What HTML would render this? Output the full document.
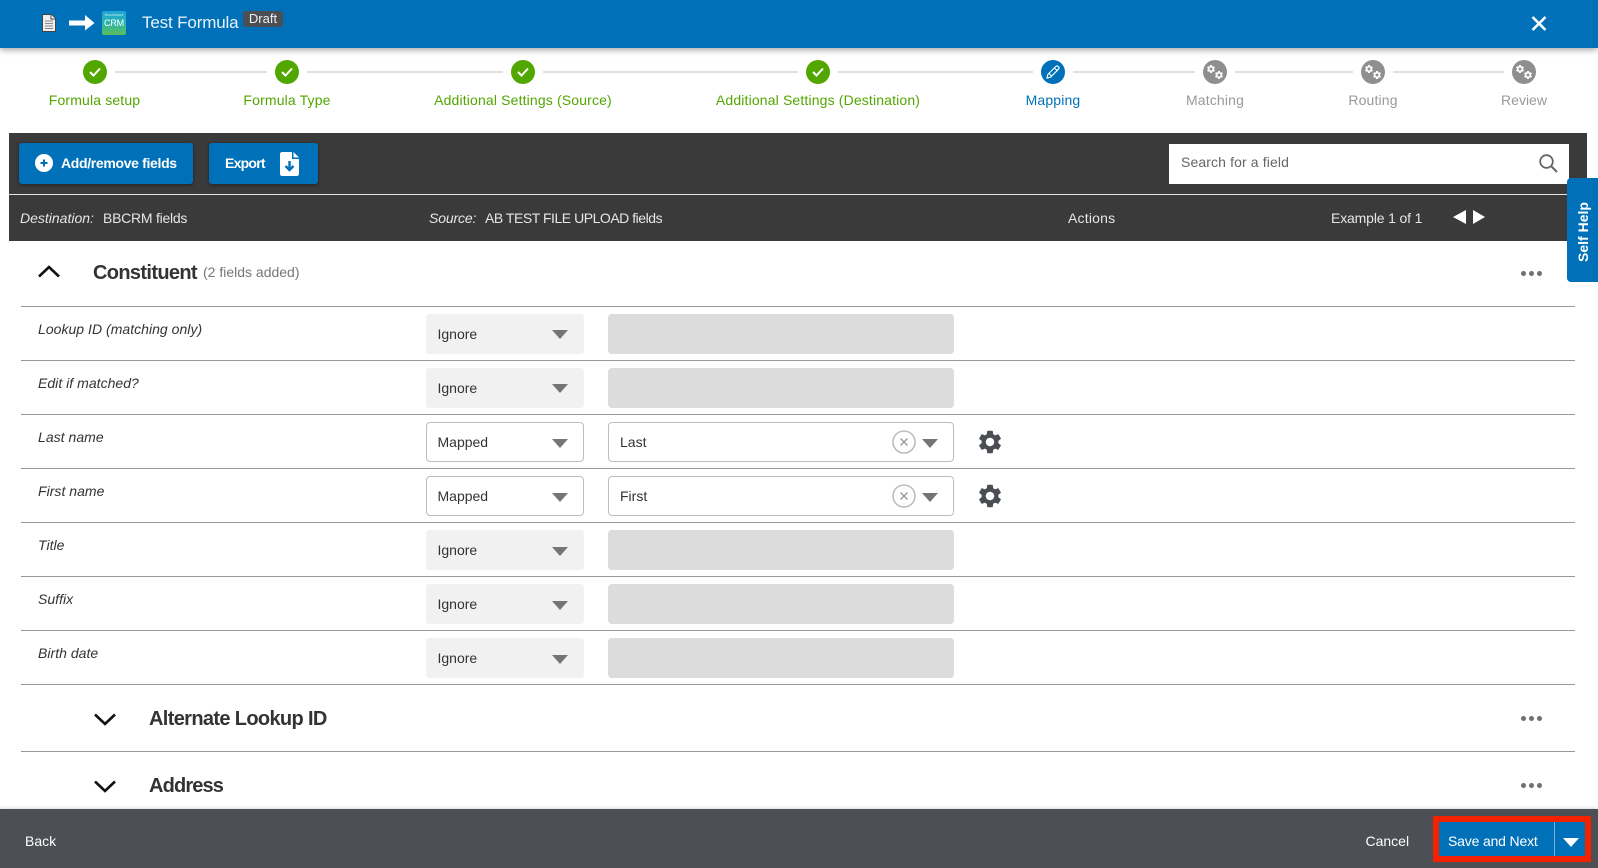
<!DOCTYPE html>
<html lang="en">
<head>
<meta charset="utf-8">
<title>Test Formula</title>
<style>
html,body{margin:0;padding:0;background:#fff;}
body{width:1598px;height:868px;position:relative;overflow:hidden;font-family:"Liberation Sans",Arial,sans-serif;font-size:14px;color:#333;}
.a{position:absolute;}
.t{position:absolute;white-space:nowrap;line-height:20px;height:20px;}
.circle{position:absolute;width:24px;height:24px;border-radius:50%;top:60px;}
.line{position:absolute;top:71px;height:2px;background:#e0e0e0;}
.lbl{position:absolute;top:90px;line-height:20px;white-space:nowrap;text-align:center;transform:translateX(-50%);letter-spacing:.15px;}
.g{color:#52a600;}
.hr{position:absolute;left:21px;width:1554px;height:1px;background:#999;}
.sel{position:absolute;left:426px;width:158px;height:40px;box-sizing:border-box;border-radius:3px;}
.sel.ig{background:#f1f1f1;}
.sel.mp{background:#fff;border:1px solid #bdbdbd;border-radius:4px;}
.inp{position:absolute;left:608px;width:346px;height:40px;box-sizing:border-box;border-radius:4px;}
.inp.dis{background:#dcdcdc;}
.inp.mp{background:#fff;border:1px solid #bdbdbd;}
.arr{position:absolute;width:0;height:0;border-left:8px solid transparent;border-right:8px solid transparent;border-top:9px solid #757575;}
.rowl{position:absolute;left:38px;font-style:italic;color:#333;line-height:20px;white-space:nowrap;letter-spacing:.03px;}
.val{position:absolute;left:437.500px;line-height:20px;color:#333;white-space:nowrap;}
.dot{position:absolute;width:5px;height:5px;border-radius:50%;background:#6f6f6f;}
.h2{position:absolute;font-weight:bold;font-size:20px;line-height:24px;color:#333;white-space:nowrap;letter-spacing:-.65px;}
svg{position:absolute;display:block;overflow:visible;}
</style>
</head>
<body>
<svg width="0" height="0" style="position:absolute"><defs>
<symbol id="gear" viewBox="0 0 24 24"><path fill-rule="evenodd" d="M19.14 12.94c.04-.3.06-.61.06-.94 0-.32-.02-.64-.07-.94l2.03-1.58c.18-.14.23-.41.12-.61l-1.92-3.32c-.12-.22-.37-.29-.59-.22l-2.39.96c-.5-.38-1.03-.7-1.62-.94l-.36-2.54c-.04-.24-.24-.41-.48-.41h-3.84c-.24 0-.43.17-.47.41l-.36 2.54c-.59.24-1.13.57-1.62.94l-2.39-.96c-.22-.08-.47 0-.59.22L2.74 8.87c-.12.21-.08.47.12.61l2.03 1.58c-.05.3-.09.63-.09.94s.02.64.07.94l-2.03 1.58c-.18.14-.23.41-.12.61l1.92 3.32c.12.22.37.29.59.22l2.39-.96c.5.38 1.03.7 1.62.94l.36 2.54c.05.24.24.41.48.41h3.84c.24 0 .44-.17.47-.41l.36-2.54c.59-.24 1.13-.56 1.62-.94l2.39.96c.22.08.47 0 .59-.22l1.92-3.32c.12-.22.07-.47-.12-.61l-2.01-1.58zM12 15.6c-1.98 0-3.6-1.62-3.6-3.6s1.62-3.6 3.6-3.6 3.6 1.62 3.6 3.6-1.62 3.6-3.6 3.6z"/></symbol>
</defs></svg>

<!-- header -->
<div class="a" style="left:0;top:0;width:1598px;height:48px;background:#0071b9;box-shadow:0 2px 6px rgba(0,0,0,.35);z-index:2;"></div>
<div class="a" style="left:0;top:0;width:1598px;height:48px;z-index:3;">
  <svg style="left:42px;top:14px" width="14" height="18" viewBox="0 0 14 18">
    <path d="M.5.5H9L13.5 5V17.5H.5Z" fill="#eee" stroke="#444" stroke-width="1"/>
    <path d="M9 .5V5h4.5" fill="#fff" stroke="#444" stroke-width="1"/>
    <path d="M3 7h8M3 9.500h8M3 12h8M3 14.500h8" stroke="#8a8a8a" stroke-width="1"/>
  </svg>
  <svg style="left:69px;top:15px" width="26" height="16" viewBox="0 0 26 16"><path d="M0 5.500H16V0L25.500 8 16 15.500V10.500H0Z" fill="#fff"/></svg>
  <div class="a" style="left:102px;top:11px;width:24px;height:24px;border-radius:2px;background:linear-gradient(#1ba4d8 0%,#2eb6a5 55%,#5cbd58 100%);"></div>
  <div class="t" style="left:102px;top:12px;width:24px;text-align:center;font-size:4px;line-height:6px;height:6px;color:#bfe9e4;">Blackbaud</div>
  <div class="t" style="left:102px;top:18px;width:24px;text-align:center;font-size:9px;line-height:10px;height:10px;color:#fff;letter-spacing:-.2px;">CRM</div>
  <div class="t" style="left:142px;top:12px;font-size:17px;line-height:22px;height:22px;color:#e9f3fa;letter-spacing:-.15px;">Test Formula</div>
  <div class="a" style="left:243px;top:11px;width:40px;height:16px;background:#4b4e53;border-radius:3px;"></div>
  <div class="t" style="left:243px;top:9px;width:40px;text-align:center;font-size:13px;color:#eee;">Draft</div>
  <svg style="left:1531px;top:16px" width="16" height="15" viewBox="0 0 16 15"><path d="M1.500 1 14.500 14M14.500 1 1.500 14" stroke="#fff" stroke-width="2.600" fill="none"/></svg>
</div>

<!-- stepper -->
<div class="line" style="left:115px;width:152px;"></div>
<div class="line" style="left:307px;width:196px;"></div>
<div class="line" style="left:543px;width:255px;"></div>
<div class="line" style="left:838px;width:195px;"></div>
<div class="line" style="left:1073px;width:122px;"></div>
<div class="line" style="left:1235px;width:118px;"></div>
<div class="line" style="left:1393px;width:111px;"></div>

<div class="circle" style="left:83px;background:#52a600;"><svg style="left:6px;top:7px" width="12" height="10" viewBox="0 0 12 10"><path d="M1 5 4.500 8.500 11 1.500" stroke="#fff" stroke-width="2" fill="none"/></svg></div>
<div class="circle" style="left:275px;background:#52a600;"><svg style="left:6px;top:7px" width="12" height="10" viewBox="0 0 12 10"><path d="M1 5 4.500 8.500 11 1.500" stroke="#fff" stroke-width="2" fill="none"/></svg></div>
<div class="circle" style="left:511px;background:#52a600;"><svg style="left:6px;top:7px" width="12" height="10" viewBox="0 0 12 10"><path d="M1 5 4.500 8.500 11 1.500" stroke="#fff" stroke-width="2" fill="none"/></svg></div>
<div class="circle" style="left:806px;background:#52a600;"><svg style="left:6px;top:7px" width="12" height="10" viewBox="0 0 12 10"><path d="M1 5 4.500 8.500 11 1.500" stroke="#fff" stroke-width="2" fill="none"/></svg></div>
<div class="circle" style="left:1041px;background:#0071b9;"><svg style="left:5px;top:5px" width="14" height="14" viewBox="0 0 14 14"><path d="M1 13 1.800 9.500 9.800 1.500C10.500.8 11.500.8 12.200 1.500L12.500 1.800C13.200 2.500 13.200 3.500 12.500 4.200L4.500 12.200ZM3 8.500 5.500 11M8.500 3 11 5.500" stroke="#fff" stroke-width="1.100" fill="none"/></svg></div>
<div class="circle" style="left:1203px;background:#8f8f8f;"><svg style="left:3px;top:4px;fill:#fff" width="10" height="10"><use href="#gear"/></svg><svg style="left:11px;top:10px;fill:#fff" width="10" height="10"><use href="#gear"/></svg></div>
<div class="circle" style="left:1361px;background:#8f8f8f;"><svg style="left:3px;top:4px;fill:#fff" width="10" height="10"><use href="#gear"/></svg><svg style="left:11px;top:10px;fill:#fff" width="10" height="10"><use href="#gear"/></svg></div>
<div class="circle" style="left:1512px;background:#8f8f8f;"><svg style="left:3px;top:4px;fill:#fff" width="10" height="10"><use href="#gear"/></svg><svg style="left:11px;top:10px;fill:#fff" width="10" height="10"><use href="#gear"/></svg></div>

<div class="lbl g" style="left:94.500px;">Formula setup</div>
<div class="lbl g" style="left:287px;">Formula Type</div>
<div class="lbl g" style="left:523px;">Additional Settings (Source)</div>
<div class="lbl g" style="left:818px;">Additional Settings (Destination)</div>
<div class="lbl" style="left:1053px;color:#0071b9;">Mapping</div>
<div class="lbl" style="left:1215px;color:#999;">Matching</div>
<div class="lbl" style="left:1373px;color:#999;">Routing</div>
<div class="lbl" style="left:1524px;color:#999;letter-spacing:0;">Review</div>

<!-- toolbar -->
<div class="a" style="left:9px;top:133px;width:1578px;height:108px;background:#3a3a3a;"></div>
<div class="a" style="left:9px;top:194px;width:1578px;height:1px;background:#e4e4e4;"></div>
<div class="a" style="left:19px;top:143px;width:174px;height:41px;background:#0071b9;border-radius:3px;box-shadow:0 1px 3px rgba(0,0,0,.4);"></div>
<svg style="left:35px;top:154px" width="18" height="18" viewBox="0 0 18 18"><circle cx="9" cy="9" r="9" fill="#fff"/><path d="M9 5.500V12.500M5.500 9H12.500" stroke="#0071b9" stroke-width="2"/></svg>
<div class="t" style="left:61px;top:153px;color:#fff;font-weight:bold;letter-spacing:-.33px;">Add/remove fields</div>
<div class="a" style="left:209px;top:143px;width:109px;height:41px;background:#0071b9;border-radius:3px;box-shadow:0 1px 3px rgba(0,0,0,.4);"></div>
<div class="t" style="left:225px;top:153px;color:#fff;font-weight:bold;letter-spacing:-.75px;">Export</div>
<svg style="left:280px;top:152px" width="19" height="24" viewBox="0 0 19 24"><path d="M2 0H12V7H19V22C19 23 18 24 17 24H2C1 24 0 23 0 22V2C0 1 1 0 2 0Z" fill="#fff"/><path d="M13.500 0 19 5.500H13.500Z" fill="#fff"/><path d="M9.500 9V17M5.500 14 9.500 18 13.500 14" stroke="#0071b9" stroke-width="2.400" fill="none"/></svg>

<div class="a" style="left:1169px;top:144px;width:400px;height:40px;background:#fff;"></div>
<div class="t" style="left:1181px;top:152px;color:#666;letter-spacing:.12px;">Search for a field</div>
<svg style="left:1539px;top:154px" width="19" height="19" viewBox="0 0 19 19"><circle cx="7.500" cy="7.500" r="6.300" stroke="#666" stroke-width="1.800" fill="none"/><path d="M12 12 18 18" stroke="#666" stroke-width="2"/></svg>

<div class="t" style="left:20px;top:208px;color:#e6e6e6;font-style:italic;">Destination:</div>
<div class="t" style="left:103px;top:208px;color:#e6e6e6;letter-spacing:-.25px;">BBCRM fields</div>
<div class="t" style="left:429px;top:208px;color:#e6e6e6;font-style:italic;letter-spacing:-.15px;">Source:</div>
<div class="t" style="left:485px;top:208px;color:#e6e6e6;letter-spacing:-.47px;">AB TEST FILE UPLOAD fields</div>
<div class="t" style="left:1068px;top:208px;color:#e6e6e6;letter-spacing:.2px;">Actions</div>
<div class="t" style="left:1331px;top:208px;color:#e6e6e6;letter-spacing:-.15px;">Example 1 of 1</div>
<svg style="left:1453px;top:210px" width="33" height="14" viewBox="0 0 33 14"><path d="M13 0V14L0 7Z" fill="#fff"/><path d="M20 0V14L32 7Z" fill="#fff"/></svg>

<!-- self help -->
<div class="a" style="left:1567px;top:178px;width:31px;height:104px;background:#0071b9;border-radius:4px 0 0 4px;z-index:5;"></div>
<div class="a" style="left:1540px;top:222px;width:86px;height:20px;line-height:20px;text-align:center;font-weight:bold;font-size:14px;color:#fff;transform:rotate(-90deg);z-index:6;white-space:nowrap;">Self Help</div>

<!-- Constituent -->
<svg style="left:38px;top:265px" width="22" height="13" viewBox="0 0 22 13"><path d="M1 11.500 11 2 21 11.500" stroke="#111" stroke-width="2.600" fill="none"/></svg>
<div class="h2" style="left:93px;top:261px;">Constituent</div>
<div class="t" style="left:203px;top:262px;color:#777;">(2 fields added)</div>
<div class="dot" style="left:1521px;top:271px;"></div><div class="dot" style="left:1529px;top:271px;"></div><div class="dot" style="left:1537px;top:271px;"></div>

<div class="hr" style="top:306px;"></div>
<div class="hr" style="top:360px;"></div>
<div class="hr" style="top:414px;"></div>
<div class="hr" style="top:468px;"></div>
<div class="hr" style="top:522px;"></div>
<div class="hr" style="top:576px;"></div>
<div class="hr" style="top:630px;"></div>
<div class="hr" style="top:684px;"></div>
<div class="hr" style="top:751px;"></div>

<div class="rowl" style="top:319px;">Lookup ID (matching only)</div>
<div class="sel ig" style="top:314px;"></div><div class="val" style="top:324px;">Ignore</div><div class="arr" style="left:552px;top:330px;"></div><div class="inp dis" style="top:314px;"></div>

<div class="rowl" style="top:373px;">Edit if matched?</div>
<div class="sel ig" style="top:368px;"></div><div class="val" style="top:378px;">Ignore</div><div class="arr" style="left:552px;top:384px;"></div><div class="inp dis" style="top:368px;"></div>

<div class="rowl" style="top:427px;">Last name</div>
<div class="sel mp" style="top:422px;"></div><div class="val" style="top:432px;">Mapped</div><div class="arr" style="left:552px;top:439px;"></div>
<div class="inp mp" style="top:422px;"></div><div class="val" style="left:620px;top:432px;">Last</div>
<svg style="left:892px;top:430px" width="24" height="24" viewBox="0 0 24 24"><circle cx="12" cy="12" r="11" fill="#fff" stroke="#bdbdbd" stroke-width="1.600"/><path d="M8.500 8.500 15.500 15.500M15.500 8.500 8.500 15.500" stroke="#999" stroke-width="1.300"/></svg>
<div class="arr" style="left:922px;top:439px;"></div>
<svg style="left:976px;top:428px;fill:#4a4d52" width="28" height="28"><use href="#gear"/></svg>

<div class="rowl" style="top:481px;">First name</div>
<div class="sel mp" style="top:476px;"></div><div class="val" style="top:486px;">Mapped</div><div class="arr" style="left:552px;top:493px;"></div>
<div class="inp mp" style="top:476px;"></div><div class="val" style="left:620px;top:486px;">First</div>
<svg style="left:892px;top:484px" width="24" height="24" viewBox="0 0 24 24"><circle cx="12" cy="12" r="11" fill="#fff" stroke="#bdbdbd" stroke-width="1.600"/><path d="M8.500 8.500 15.500 15.500M15.500 8.500 8.500 15.500" stroke="#999" stroke-width="1.300"/></svg>
<div class="arr" style="left:922px;top:493px;"></div>
<svg style="left:976px;top:482px;fill:#4a4d52" width="28" height="28"><use href="#gear"/></svg>

<div class="rowl" style="top:535px;">Title</div>
<div class="sel ig" style="top:530px;"></div><div class="val" style="top:540px;">Ignore</div><div class="arr" style="left:552px;top:547px;"></div><div class="inp dis" style="top:530px;"></div>

<div class="rowl" style="top:589px;">Suffix</div>
<div class="sel ig" style="top:584px;"></div><div class="val" style="top:594px;">Ignore</div><div class="arr" style="left:552px;top:601px;"></div><div class="inp dis" style="top:584px;"></div>

<div class="rowl" style="top:643px;">Birth date</div>
<div class="sel ig" style="top:638px;"></div><div class="val" style="top:648px;">Ignore</div><div class="arr" style="left:552px;top:655px;"></div><div class="inp dis" style="top:638px;"></div>

<svg style="left:94px;top:713px" width="22" height="13" viewBox="0 0 22 13"><path d="M1 1.500 11 11 21 1.500" stroke="#111" stroke-width="2.600" fill="none"/></svg>
<div class="h2" style="left:149px;top:707px;">Alternate Lookup ID</div>
<div class="dot" style="left:1521px;top:716px;"></div><div class="dot" style="left:1529px;top:716px;"></div><div class="dot" style="left:1537px;top:716px;"></div>

<svg style="left:94px;top:780px" width="22" height="13" viewBox="0 0 22 13"><path d="M1 1.500 11 11 21 1.500" stroke="#111" stroke-width="2.600" fill="none"/></svg>
<div class="h2" style="left:149px;top:774px;letter-spacing:-.85px;">Address</div>
<div class="dot" style="left:1521px;top:783px;"></div><div class="dot" style="left:1529px;top:783px;"></div><div class="dot" style="left:1537px;top:783px;"></div>

<!-- footer -->
<div class="a" style="left:0;top:809px;width:1598px;height:59px;background:#4c4f54;box-shadow:0 -1px 3px rgba(0,0,0,.15);z-index:7;"></div>
<div style="position:absolute;left:0;top:0;z-index:8;">
<div class="t" style="left:25px;top:831px;color:#fff;">Back</div>
<div class="t" style="left:1365.500px;top:831px;color:#fff;">Cancel</div>
<div class="a" style="left:1433px;top:816px;width:146px;height:34px;border:6px solid #f52200;background:#0071b9;"></div>
<div class="t" style="left:1448px;top:831px;color:#fff;letter-spacing:-.17px;">Save and Next</div>
<div class="a" style="left:1554px;top:822px;width:1px;height:34px;background:#7fb2d6;"></div>
<div class="arr" style="left:1563px;top:838px;border-top-color:#fff;"></div>
</div>
</body>
</html>
